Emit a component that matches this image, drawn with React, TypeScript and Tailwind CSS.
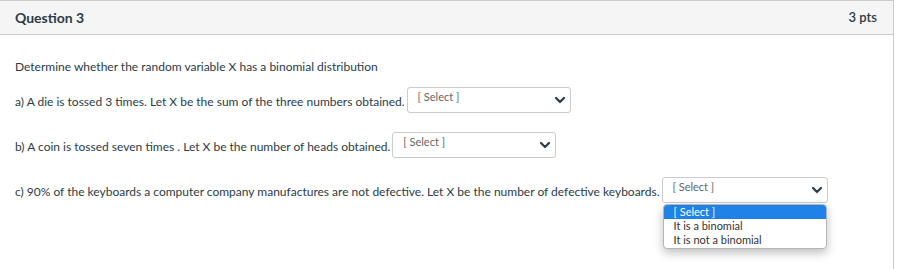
import React from 'react';

const Chevron = () => (
  <svg width="12" height="12" viewBox="0 0 12 12" className="shrink-0">
    <path d="M2 4 L6 8 L10 4" fill="none" stroke="#2d3b45" strokeWidth="2.2" strokeLinecap="round" strokeLinejoin="round" />
  </svg>
);

const SelectBox: React.FC<{ width?: string }> = ({ width = 'w-[164px]' }) => (
  <div className={`${width} h-[26px] border border-[#c7cdd1] rounded-[3px] bg-white flex items-center justify-between pl-[10px] pr-[4px] ml-[2px]`}>
    <span className="text-[11px] text-[#666] -mt-[5px]">[ Select ]</span>
    <Chevron />
  </div>
);

export default function App() {
  return (
    <div className="w-[898px] h-[269px] bg-white overflow-hidden font-['Lato','Open_Sans',sans-serif] text-[#2d3b45]">
      <div className="w-[894px] h-full border-t border-r border-[#c7cdd1]">
        <div className="h-[34px] bg-[#f5f5f5] border-b border-[#c7cdd1] flex items-center justify-between pl-[15px] pr-[16px]">
          <span className="text-[14px] font-bold text-[#2d3b45]">Question 3</span>
          <span className="text-[13px] font-semibold text-[#2d3b45]">3 pts</span>
        </div>

        <div className="pl-[15px] pt-[23px] flex flex-col">
          <p className="text-[12px] leading-[18px]">Determine whether the random variable X has a binomial distribution</p>

          <div className="mt-[11px] flex items-center h-[26px]">
            <span className="text-[12px] pt-[4px]">a) A die is tossed 3 times. Let X be the sum of the three numbers obtained.</span>
            <SelectBox />
          </div>

          <div className="mt-[19px] flex items-center h-[26px]">
            <span className="text-[12px] pt-[4px]">b) A coin is tossed seven times . Let X be the number of heads obtained.</span>
            <SelectBox />
          </div>

          <div className="mt-[19px] flex items-center h-[26px]">
            <span className="text-[12px] pt-[4px]">c) 90% of the keyboards a computer company manufactures are not defective. Let X be the number of defective keyboards.</span>
            <div className="relative">
              <SelectBox width="w-[166px]" />
              <div className="absolute left-[3px] top-[27px] w-[164px] bg-white border border-[#b5b5b5] rounded-[4px] shadow-[0_4px_10px_rgba(0,0,0,0.25)] overflow-hidden text-[11px] leading-[14px] text-[#333]">
                <div className="bg-[#1e82e8] text-white pl-[10px]">[ Select ]</div>
                <div className="pl-[10px]">It is a binomial</div>
                <div className="pl-[10px] pb-[1px]">It is not a binomial</div>
              </div>
            </div>
          </div>
        </div>
      </div>
    </div>
  );
}
